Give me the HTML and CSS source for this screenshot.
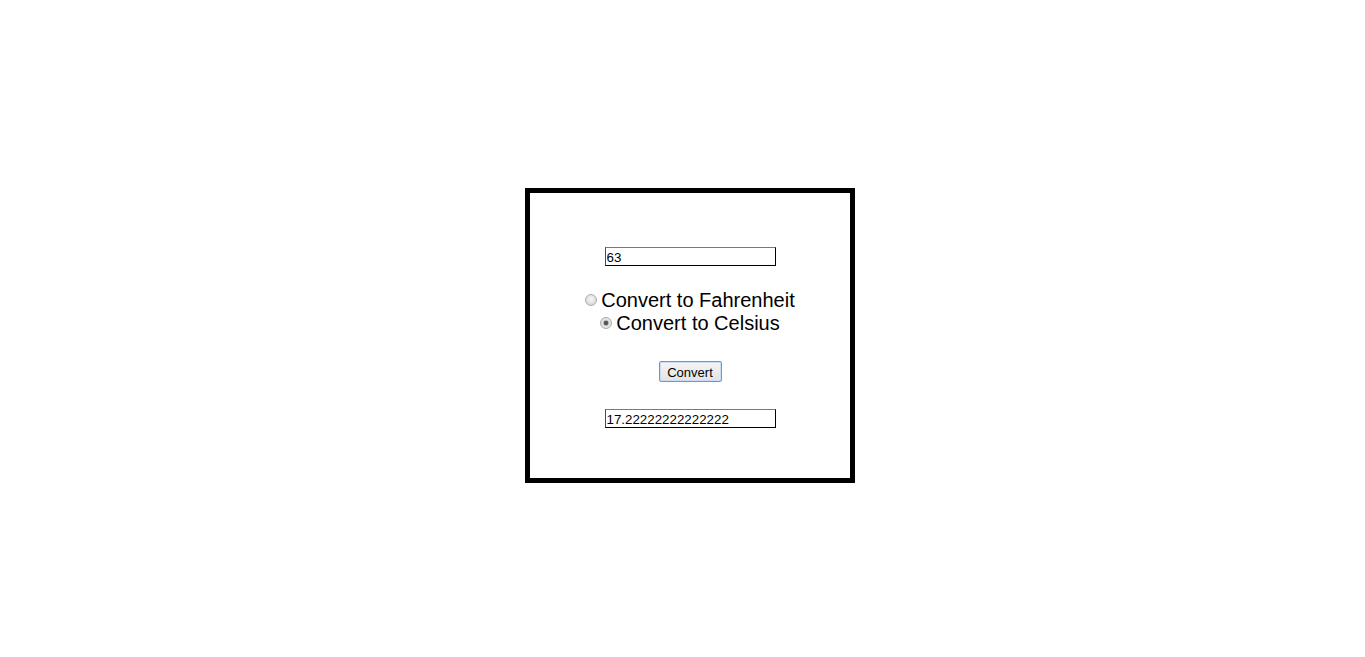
FILE: index.html
```html
<!DOCTYPE html>
<html>
<head>
<meta charset="utf-8">
<title>Temperature Converter</title>
<link rel="stylesheet" href="styles.css">
</head>
<body>
<div class="page">
  <div class="converter">
    <input class="field" type="text" value="63">
    <div class="options">
      <label class="option"><input class="radio" type="radio" name="mode"><span>Convert to Fahrenheit</span></label>
      <label class="option"><input class="radio" type="radio" name="mode" checked><span>Convert to Celsius</span></label>
    </div>
    <button class="convert-btn" type="button">Convert</button>
    <input class="field result" type="text" value="17.22222222222222">
  </div>
</div>
</body>
</html>
```
FILE: styles.css
```css
html, body {
  margin: 0;
  padding: 0;
  background: #ffffff;
}
body {
  font-family: "Liberation Sans", Arial, sans-serif;
  color: #000;
}
.page {
  padding: 188px 0 0 525px;
}
.converter {
  width: 320px;
  height: 231px;
  border: 5px solid #000;
  display: flex;
  flex-direction: column;
  align-items: center;
  padding-top: 54px;
  box-sizing: content-box;
}
.field {
  box-sizing: border-box;
  width: 171px;
  height: 19px;
  margin: 0;
  padding: 1px 0 0 1px;
  border: 1px solid #000;
  border-top-color: #7a7a7a;
  border-left-color: #4a4a4a;
  font-family: "Liberation Sans", Arial, sans-serif;
  font-size: 13.33px;
  color: #000;
  background: #fff;
  outline: none;
}
.options {
  margin-top: 23px;
  display: flex;
  flex-direction: column;
  align-items: center;
}
.option {
  display: flex;
  align-items: center;
  height: 23px;
  font-size: 20px;
  line-height: 23px;
}
.radio {
  appearance: none;
  -webkit-appearance: none;
  width: 12px;
  height: 12px;
  margin: 0 4px 0 0;
  border-radius: 50%;
  border: 1px solid #ababab;
  box-sizing: border-box;
  background: radial-gradient(circle at 50% 40%, #f6f6f6 0%, #e0e0e0 60%, #cfcfcf 100%);
  position: relative;
  top: -1px;
}
.radio:checked {
  background: radial-gradient(circle, #505050 0, #5e5e5e 2px, #bdbdbd 2.6px, #e8e8e8 3.6px, #d6d6d6 100%);
}
.convert-btn {
  margin-top: 26px;
  width: 63px;
  height: 21px;
  padding: 1px 0 0;
  font-family: "Liberation Sans", Arial, sans-serif;
  font-size: 13px;
  color: #000;
  border: 1px solid #5c9ce6;
  border-radius: 2px;
  background: linear-gradient(#f5f5f5, #e3e3e3);
  box-shadow: inset 0 0 0 1px #c9dcf3;
}
.result {
  margin-top: 27px;
}
```
